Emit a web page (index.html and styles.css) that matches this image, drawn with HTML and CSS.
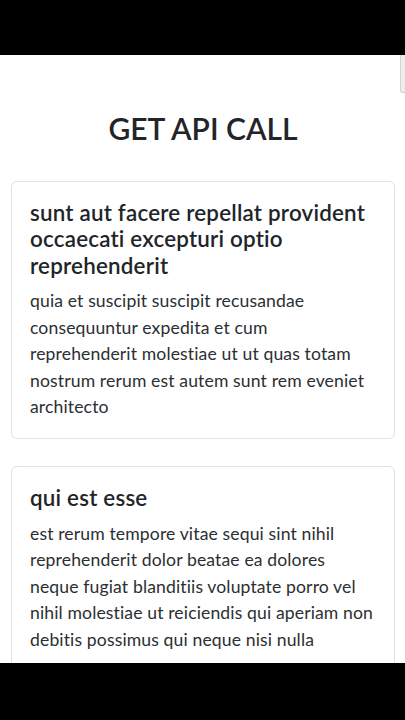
FILE: index.html
```html
<!DOCTYPE html>
<html lang="en">
<head>
<meta charset="utf-8">
<meta name="viewport" content="width=device-width, initial-scale=1">
<title>GET API CALL</title>
<link rel="stylesheet" href="styles.css">
</head>
<body>
<div class="bar-top"></div>
<main class="screen">
  <div class="scroll-thumb"></div>
  <div class="container">
    <h1 class="page-title">GET API CALL</h1>
    <div class="card">
      <div class="card-body">
        <h5 class="card-title">sunt aut facere repellat provident occaecati excepturi optio reprehenderit</h5>
        <p class="card-text">quia et suscipit suscipit recusandae consequuntur expedita et cum reprehenderit molestiae ut ut quas totam nostrum rerum est autem sunt rem eveniet architecto</p>
      </div>
    </div>
    <div class="card">
      <div class="card-body">
        <h5 class="card-title">qui est esse</h5>
        <p class="card-text">est rerum tempore vitae sequi sint nihil reprehenderit dolor beatae ea dolores neque fugiat blanditiis voluptate porro vel nihil molestiae ut reiciendis qui aperiam non debitis possimus qui neque nisi nulla</p>
      </div>
    </div>
  </div>
</main>
<div class="bar-bottom"></div>
</body>
</html>
```
FILE: styles.css
```css
html, body {
  margin: 0;
  padding: 0;
  background: #000;
}
body {
  width: 405px;
  height: 720px;
  display: flex;
  flex-direction: column;
  font-family: Lato, "Liberation Sans", sans-serif;
  color: #212529;
}
.bar-top {
  height: 55px;
  background: #000;
  flex: none;
}
.bar-bottom {
  flex: 1;
  background: #000;
}
.screen {
  position: relative;
  height: 608px;
  flex: none;
  background: #fff;
  overflow: hidden;
}
.scroll-thumb {
  position: absolute;
  right: 0;
  top: 0;
  width: 4px;
  height: 37px;
  background: #ececec;
  border-left: 1px solid #d4d4d4;
  border-bottom: 1px solid #d4d4d4;
  border-bottom-left-radius: 3px;
}
.container {
  padding: 55px 10px 0 11px;
  display: flex;
  flex-direction: column;
}
.page-title {
  margin: 0 0 34px;
  text-align: center;
  font-size: 30px;
  line-height: 37px;
  font-weight: 600;
  color: #212529;
}
.card {
  border: 1px solid #e1e1e1;
  border-radius: 6px;
  margin-bottom: 27px;
}
.card-body {
  padding: 17.6px 18px 17.6px 18px;
}
.card-title {
  margin: 0 0 9px;
  font-size: 22.4px;
  line-height: 26.6px;
  letter-spacing: 0.2px;
  font-weight: 600;
}
.card-text {
  margin: 0;
  font-size: 17.6px;
  line-height: 26.5px;
  letter-spacing: 0.12px;
  color: #2b2f33;
}
```
